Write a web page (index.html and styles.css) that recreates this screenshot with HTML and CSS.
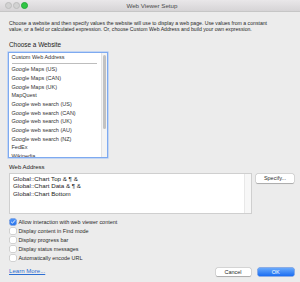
FILE: index.html
```html
<!DOCTYPE html>
<html>
<head>
<meta charset="utf-8">
<link rel="stylesheet" href="styles.css">
</head>
<body>
<div class="window">
  <div class="topline"></div>
  <div class="titlebar">
    <div class="lights">
      <span class="light gray"></span>
      <span class="light gray"></span>
      <span class="light green"></span>
    </div>
    <div class="title">Web Viewer Setup</div>
  </div>
  <div class="content">
    <p class="desc"><span class="line">Choose a website and then specify values the website will use to display a web page. Use values from a constant</span><span class="line">value, or a field or calculated expression. Or, choose Custom Web Address and build your own expression.</span></p>
    <div class="heading">Choose a Website</div>
    <div class="listbox">
      <div class="items">
        <div class="item">Custom Web Address</div>
        <div class="sep"></div>
        <div class="item">Google Maps (US)</div>
        <div class="item">Google Maps (CAN)</div>
        <div class="item">Google Maps (UK)</div>
        <div class="item">MapQuest</div>
        <div class="item">Google web search (US)</div>
        <div class="item">Google web search (CAN)</div>
        <div class="item">Google web search (UK)</div>
        <div class="item">Google web search (AU)</div>
        <div class="item">Google web search (NZ)</div>
        <div class="item">FedEx</div>
        <div class="item">Wikipedia</div>
      </div>
      <div class="vscroll"><div class="thumb"></div></div>
    </div>
    <div class="label">Web Address</div>
    <div class="addr-row">
      <div class="textarea">
        <div class="code">
          <div>Global::Chart Top &amp; ¶ &amp;</div>
          <div>Global::Chart Data &amp; ¶ &amp;</div>
          <div>Global::Chart Bottom</div>
        </div>
        <div class="track"></div>
      </div>
      <div class="btn specify">Specify...</div>
    </div>
    <div class="checks">
      <div class="check"><span class="box on"><svg viewBox="0 0 6 6" width="6" height="6"><path d="M1.4 3.1 L2.5 4.2 L4.7 1.6" fill="none" stroke="#fff" stroke-width="0.9" stroke-linecap="round" stroke-linejoin="round"/></svg></span>Allow interaction with web viewer content</div>
      <div class="check"><span class="box"></span>Display content in Find mode</div>
      <div class="check"><span class="box"></span>Display progress bar</div>
      <div class="check"><span class="box"></span>Display status messages</div>
      <div class="check"><span class="box"></span>Automatically encode URL</div>
    </div>
    <div class="footer">
      <a class="learn" href="#">Learn More...</a>
      <div class="buttons">
        <div class="btn cancel">Cancel</div>
        <div class="btn ok">OK</div>
      </div>
    </div>
  </div>
</div>
</body>
</html>
```

FILE: styles.css
```css
* { box-sizing: border-box; }
html, body { margin: 0; padding: 0; }
body {
  width: 300px;
  height: 282px;
  overflow: hidden;
  background: #ececec;
  font-family: "Liberation Sans", Arial, sans-serif;
  color: #262626;
}
.window {
  position: relative;
  width: 300px;
  height: 282px;
  background: #ececec;
}
.topline {
  position: absolute;
  left: 202px;
  top: 0;
  width: 48px;
  height: 1px;
  background: #8a8a8a;
}
.titlebar {
  height: 12px;
  display: flex;
  align-items: center;
  background: linear-gradient(#e9e7e9, #d6d4d6);
  border-bottom: 1px solid #c6c6c6;
  position: relative;
}
.lights {
  display: flex;
  gap: 1.2px;
  padding-left: 4.5px;
}
.light {
  width: 7px;
  height: 7px;
  border-radius: 50%;
}
.light.gray { background: #d2d2d2; border: 0.5px solid #bdbdbd; }
.light.green { background: #2fc643; border: 0.5px solid #27a83a; }
.title {
  flex: 1;
  text-align: center;
  font-size: 6.2px;
  color: #4a4a4a;
  margin-right: 24px;
}
.content {
  padding: 0 6px 0 9px;
}
.desc {
  margin: 8px 0 0;
  font-size: 5.15px;
  line-height: 6px;
  color: #262626;
  white-space: nowrap;
}
.line { display: block; }
.heading {
  margin-top: 9px;
  font-size: 6.4px;
  line-height: 8px;
  color: #222;
}
.listbox {
  margin-top: 3px;
  margin-left: -1px;
  width: 100px;
  height: 106px;
  background: #fff;
  border: 1px solid #7eaaf0;
  box-shadow: 0 0 0 0.6px #a9c7f7;
  display: flex;
  overflow: hidden;
}
.items {
  flex: 1;
  padding: 0 0 0 2.5px;
}
.item {
  height: 8.7px;
  line-height: 8.7px;
  font-size: 5.5px;
  color: #333;
  white-space: nowrap;
}
.sep {
  height: 3.6px;
  display: flex;
  align-items: center;
}
.sep::after {
  content: "";
  display: block;
  width: 85px;
  height: 0.7px;
  background: #bdbdbd;
}
.vscroll {
  width: 6.5px;
  background: #f4f4f4;
  border-left: 1px solid #e4e4e4;
  padding: 2px 1px;
}
.thumb {
  height: 74px;
  background: #c2c2c2;
  border-radius: 2px;
}
.label {
  margin-top: 4.7px;
  font-size: 6px;
  line-height: 8px;
  color: #222;
}
.addr-row {
  margin-top: 2.6px;
  display: flex;
  align-items: flex-start;
  gap: 4px;
}
.textarea {
  width: 243px;
  height: 40.7px;
  background: #fff;
  border: 0.6px solid #cfcfcf;
  display: flex;
}
.code {
  flex: 1;
  padding: 0.5px 0 0 3px;
  font-size: 6.2px;
  line-height: 7.7px;
  color: #1a1a1a;
  white-space: nowrap;
}
.track {
  width: 7px;
  background: #f7f7f7;
  border-left: 1px solid #e8e8e8;
}
.btn {
  display: flex;
  align-items: center;
  justify-content: center;
  font-size: 5.5px;
  color: #2a2a2a;
  background: #fff;
  border-radius: 1.5px;
  box-shadow: 0 0 0 0.5px rgba(0,0,0,0.18), 0 0.5px 0.8px rgba(0,0,0,0.2);
}
.specify {
  margin-top: 1px;
  width: 38px;
  height: 8.4px;
}
.checks {
  margin-top: 3.5px;
}
.check {
  height: 9px;
  display: flex;
  align-items: center;
  font-size: 5.45px;
  color: #2a2a2a;
  white-space: nowrap;
}
.box {
  width: 6px;
  height: 6px;
  margin-left: 1px;
  margin-right: 2.4px;
  border-radius: 1.2px;
  background: #fff;
  box-shadow: 0 0 0 0.5px rgba(0,0,0,0.22);
  display: flex;
}
.box.on {
  background: linear-gradient(#4d93f8, #2a74ea);
  box-shadow: 0 0 0 0.5px #2a6ad8;
}
.footer {
  margin-top: 4.5px;
  height: 9px;
  display: flex;
  align-items: center;
  justify-content: space-between;
}
.learn {
  font-size: 6.1px;
  color: #2d6fd2;
  text-decoration: underline;
  margin-top: -1.5px;
}
.buttons {
  display: flex;
  gap: 7px;
  padding-top: 1px;
}
.cancel { width: 35px; height: 8.7px; }
.ok {
  width: 36.5px;
  height: 8.7px;
  color: #fff;
  background: linear-gradient(#69a9fb, #1b6df2);
  box-shadow: 0 0 0 0.5px #2a6ddd;
}
```
